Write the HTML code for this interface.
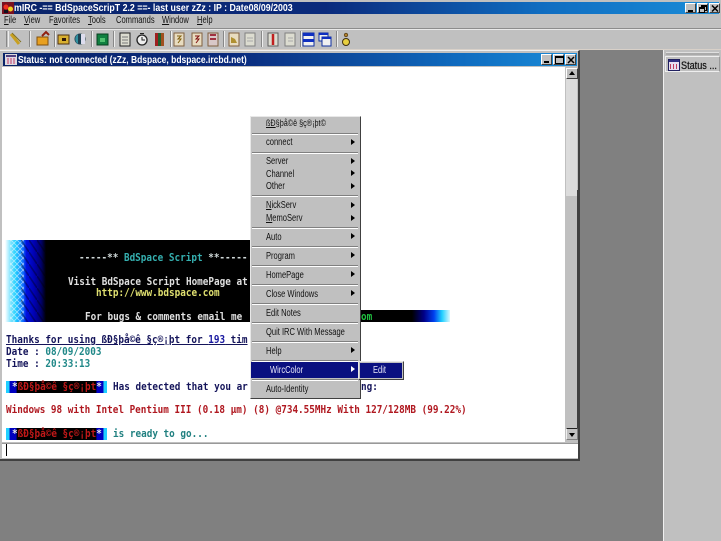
<!DOCTYPE html>
<html><head><meta charset="utf-8"><style>
html,body{margin:0;padding:0;width:721px;height:541px;overflow:hidden;background:#808080}
#root{position:absolute;left:0;top:0;width:721px;height:541px;overflow:hidden;filter:blur(.25px)}
div,span.a,svg{position:absolute}
.t{white-space:pre;height:12px;transform-origin:0 50%}
.u{font:10px/12px "Liberation Sans",sans-serif;color:#111;transform:scaleX(.755)}
.m{font:bold 10.3px/12px "DejaVu Sans Mono","Liberation Mono",monospace;color:#14145a;transform:scaleX(.906)}
.h{font:bold 10.2px/12px "Liberation Sans",sans-serif;color:#fff}
.sep{left:252px;width:106px;height:1px;background:#808080;border-bottom:1px solid #fff}
.arr{left:351px;width:0;height:0;border-left:4px solid #000;border-top:3.5px solid transparent;border-bottom:3.5px solid transparent}
.btn{background:#c0c0c0;border:1px solid;border-color:#fff #404040 #404040 #fff;box-sizing:border-box}
.ts{top:31px;width:2px;height:16px;border-left:1px solid #888;border-right:1px solid #eee;box-sizing:border-box}
u{text-underline-offset:1px}
</style></head><body><div id="root">

<!-- main frame -->
<div style="left:0;top:0;width:721px;height:50px;background:#c0c0c0"></div>
<div style="left:2px;top:2px;width:717px;height:12px;background:linear-gradient(90deg,#0a246a 0,#0a2a7c 45%,#0f6cc0 75%,#1a8cd8 100%)"></div>
<div class="t h" style="left:14px;top:3px;transform:scaleX(.864)">mIRC -== BdSpaceScripT 2.2 ==- last user zZz : IP : Date08/09/2003</div>
<svg style="left:2px;top:2px" width="12" height="12"><rect width="12" height="12" fill="#7a1020"/><circle cx="4" cy="5" r="2.5" fill="#f03020"/><circle cx="8.5" cy="7" r="2.5" fill="#f0d020"/><rect x="2" y="8" width="4" height="3" fill="#101020"/></svg>
<div class="btn" style="left:685px;top:3px;width:11px;height:10px"><div style="left:2px;top:6px;width:5px;height:2px;background:#000"></div></div>
<div class="btn" style="left:697px;top:3px;width:11px;height:10px"><div style="left:3px;top:1px;width:4px;height:3px;border:1px solid #000;border-top-width:2px"></div><div style="left:1px;top:3px;width:4px;height:3px;border:1px solid #000;border-top-width:2px;background:#c0c0c0"></div></div>
<div class="btn" style="left:709px;top:3px;width:11px;height:10px"><svg style="left:1px;top:1px" width="8" height="7"><path d="M1 0.5L7 6.5M7 0.5L1 6.5" stroke="#000" stroke-width="1.5"/></svg></div>

<!-- menu bar -->
<div class="t u" style="left:4px;top:15px"><u>F</u>ile</div>
<div class="t u" style="left:24px;top:15px"><u>V</u>iew</div>
<div class="t u" style="left:49px;top:15px">F<u>a</u>vorites</div>
<div class="t u" style="left:88px;top:15px"><u>T</u>ools</div>
<div class="t u" style="left:116px;top:15px">Commands</div>
<div class="t u" style="left:162px;top:15px"><u>W</u>indow</div>
<div class="t u" style="left:197px;top:15px"><u>H</u>elp</div>
<div style="left:0;top:29px;width:721px;height:1px;background:#e8e8e8"></div>
<div style="left:0;top:28px;width:721px;height:1px;background:#8c8c8c"></div>
<div style="left:0;top:49px;width:721px;height:1px;background:#d8d0c8"></div>

<!-- toolbar separators -->
<div class="ts" style="left:6px;width:3px"></div>
<div class="ts" style="left:29px"></div><div class="ts" style="left:54px"></div><div class="ts" style="left:91px"></div><div class="ts" style="left:113px"></div><div class="ts" style="left:170px"></div><div class="ts" style="left:223px"></div><div class="ts" style="left:261px"></div><div class="ts" style="left:300px"></div><div class="ts" style="left:336px"></div>

<!-- toolbar icons -->
<svg style="left:0;top:30px" width="360" height="18">
<path d="M11 4L19 14" stroke="#c8a020" stroke-width="3"/><path d="M12 3L21 12" stroke="#807020" stroke-width="1"/>
<rect x="37" y="7" width="11" height="8" fill="#e8a020" stroke="#805010"/><path d="M42 6L46 2L49 5" stroke="#902010" stroke-width="2" fill="none"/>
<rect x="58" y="5" width="11" height="9" fill="#d8b030" stroke="#503010"/><rect x="62" y="8" width="4" height="3" fill="#301808"/>
<circle cx="80" cy="9" r="5.5" fill="#204050"/><path d="M78 4a6 6 0 0 0 0 10z" fill="#3090a0"/><rect x="81" y="4" width="4" height="10" fill="#dde"/>
<rect x="97" y="4" width="11" height="11" fill="#108040" stroke="#084020"/><rect x="100" y="8" width="5" height="4" fill="#50c070"/>
<rect x="120" y="3" width="10" height="13" fill="#dcdcd0" stroke="#222"/><path d="M122 7h6M122 10h6M122 13h6" stroke="#777"/>
<circle cx="142" cy="10" r="5" fill="#eee" stroke="#222" stroke-width="1.3"/><path d="M142 7v3h3M140 3.500h4" stroke="#222" fill="none"/>
<rect x="155" y="3" width="3" height="13" fill="#a02020"/><rect x="158" y="3" width="3" height="13" fill="#206030"/><rect x="161" y="3" width="3" height="13" fill="#a05020"/>
<g stroke="#806040" fill="#e8dcc0"><rect x="174" y="3" width="10" height="13"/><rect x="192" y="3" width="10" height="13"/><rect x="208" y="3" width="10" height="13" fill="#d8c8c8"/><rect x="229" y="3" width="10" height="13"/></g>
<path d="M177 6h4l-3 3h3l-3 4" stroke="#806010" fill="none"/><path d="M195 6h4l-3 3h3l-3 4" stroke="#801010" fill="none"/><path d="M210 5h6M210 9h6" stroke="#a03040" stroke-width="2"/><path d="M231 7l4 2 2 4h-6z" fill="#b09030"/>
<rect x="245" y="3" width="10" height="13" fill="#dcdcd0" stroke="#808080"/><path d="M247 8h6M247 11h6" stroke="#aaa"/>
<rect x="268" y="3" width="10" height="13" fill="#dcdcd0" stroke="#606060"/><path d="M273 4v11" stroke="#c02020" stroke-width="2.500"/>
<rect x="285" y="3" width="10" height="13" fill="#dcdcd0" stroke="#808080"/><path d="M288 8h5M288 11h5" stroke="#aaa"/>
<rect x="303" y="3" width="11" height="13" fill="#f0f0f0" stroke="#1030a0"/><rect x="303" y="3" width="11" height="3" fill="#1030c0"/><rect x="303" y="9" width="11" height="3" fill="#1030c0"/>
<rect x="319" y="3" width="9" height="8" fill="#f0f0f0" stroke="#1030a0"/><rect x="319" y="3" width="9" height="2" fill="#1030c0"/><rect x="322" y="7" width="9" height="9" fill="#f0f0f0" stroke="#1030a0"/><rect x="322" y="7" width="9" height="2" fill="#1030c0"/>
<circle cx="346" cy="12" r="3.5" fill="#e8d040" stroke="#403010"/><circle cx="346" cy="5" r="1.8" fill="#b08030" stroke="#403010" stroke-width=".6"/>
</svg>

<!-- MDI area -->
<div style="left:0;top:50px;width:663px;height:491px;background:#808080"></div>

<!-- right panel -->
<div style="left:663px;top:50px;width:58px;height:491px;background:#c0c0c0;border-left:1px solid #f0f0f0;box-sizing:border-box"></div>
<div style="left:666px;top:52px;width:53px;height:2px;background:#aaa;border-top:1px solid #e0e0e0"></div>
<div style="left:665px;top:56px;width:55px;height:16px;box-sizing:border-box;border:1px solid;border-color:#eee #999 #eee #eee"></div>
<svg style="left:668px;top:59px" width="12" height="12"><rect x=".5" y=".5" width="11" height="11" fill="#e8e0f0" stroke="#202060"/><rect x="1" y="1" width="10" height="2" fill="#303080"/><path d="M2.500 5v5M5.500 5v5M8.500 5v5" stroke="#c04060"/></svg>
<div class="t" style="left:681px;top:60px;font:10.6px/12px 'Liberation Sans',sans-serif;color:#111;-webkit-text-stroke:.2px #111;transform:scaleX(.86)">Status ...</div>

<!-- child window -->
<div style="left:0;top:50px;width:580px;height:411px;background:#c0c0c0;border-right:2px solid #404040;border-bottom:2px solid #404040;border-top:1px solid #f0f0f0;box-sizing:border-box"></div>
<div style="left:3px;top:53px;width:574px;height:13px;background:linear-gradient(90deg,#0a246a 0,#0a2a7c 40%,#0f6cc0 80%,#1a8cd8 100%)"></div>
<svg style="left:5px;top:54px" width="12" height="11"><rect x=".5" y=".5" width="11" height="10" fill="#e0d8e8" stroke="#ddd"/><rect x="1" y="1" width="10" height="2" fill="#504080"/><path d="M3 4v6M6 4v6M9 4v6" stroke="#c04060"/></svg>
<div class="t h" style="left:18px;top:55px;transform:scaleX(.835)">Status: not connected (zZz, Bdspace, bdspace.ircbd.net)</div>
<div class="btn" style="left:541px;top:54px;width:11px;height:11px"><div style="left:2px;top:6px;width:5px;height:2px;background:#000"></div></div>
<div class="btn" style="left:553px;top:54px;width:11px;height:11px"><div style="left:1px;top:1px;width:7px;height:5px;border:1px solid #000;border-top-width:2px"></div></div>
<div class="btn" style="left:565px;top:54px;width:11px;height:11px"><svg style="left:1px;top:1px" width="8" height="8"><path d="M1 1L7 7M7 1L1 7" stroke="#000" stroke-width="1.5"/></svg></div>

<!-- client -->
<div style="left:2px;top:67px;width:563px;height:375px;background:#fff"></div>
<div style="left:565px;top:67px;width:13px;height:375px;background:#c0c0c0"></div>
<div style="left:566px;top:79px;width:11px;height:117px;background:#dcdcdc"></div>
<div style="left:577px;top:190px;width:1px;height:240px;background:#404040"></div>
<div class="btn" style="left:566px;top:68px;width:12px;height:11px"><div style="left:2px;top:2px;width:0;height:0;border-left:3.5px solid transparent;border-right:3.5px solid transparent;border-bottom:4px solid #000"></div></div>
<div class="btn" style="left:566px;top:428px;width:12px;height:12px;border-color:#222 #808080 #808080 #eee"><div style="left:2px;top:4px;width:0;height:0;border-left:3.5px solid transparent;border-right:3.5px solid transparent;border-top:4px solid #000"></div></div>
<div style="left:2px;top:442px;width:576px;height:2px;background:#c0c0c0"></div>
<div style="left:2px;top:444px;width:576px;height:14px;background:#fff"></div>
<div style="left:2px;top:443px;width:576px;height:1px;background:#999"></div>
<div style="left:6px;top:444px;width:1px;height:12px;background:#000"></div>

<!-- banner -->
<div style="left:5px;top:240px;width:245px;height:82px;background:#000"></div>
<div style="left:5px;top:240px;width:41px;height:82px;background:linear-gradient(90deg,#fff 0,#90e8ff 12%,#20d0ff 26%,#1070ff 44%,#0010e0 52%,#0000b0 72%,#00006a 88%,#000 100%)"></div>
<svg style="left:5px;top:240px" width="41" height="82"><defs><pattern id="p" width="6" height="6" patternUnits="userSpaceOnUse"><path d="M0 0l3 3M3 3l3 3M6 0L0 6" stroke="#fff" stroke-width=".8" opacity=".55"/></pattern><pattern id="q" width="8" height="12" patternUnits="userSpaceOnUse"><path d="M0 0L8 12" stroke="#000" stroke-width="1.6" opacity=".35"/></pattern></defs><rect x="5" width="14" height="82" fill="url(#p)"/><rect x="16" width="25" height="82" fill="url(#q)"/></svg>
<div style="left:250px;top:310px;width:200px;height:12px;background:linear-gradient(90deg,#000 0,#000 81%,#000088 87%,#0040f0 92%,#20d0ff 96%,#d8f8ff 100%)"></div>
<div class="t m" style="left:79px;top:252px;color:#cfd8d8">-----** <span style="color:#35b0b0">BdSpace Script</span> **-----</div>
<div class="t m" style="left:68px;top:276px;color:#e0e0e0">Visit BdSpace Script HomePage at</div>
<div class="t m" style="left:96px;top:287px;color:#e0e070">http://www.bdspace.com</div>
<div class="t m" style="left:85px;top:311px;color:#e0e0e0">For bugs &amp; comments email me</div>
<div class="t m" style="left:361px;top:311px;color:#20c040">om</div>

<!-- chat text -->
<div class="t m" style="left:6px;top:334px;text-decoration:underline;text-underline-offset:1px">Thanks for using ßÐ§þå©ê §ç®¡þt for <span style="color:#1818a0">193</span> tim</div>
<div class="t m" style="left:6px;top:346px">Date : <span style="color:#208888">08/09/2003</span></div>
<div class="t m" style="left:6px;top:358px">Time : <span style="color:#208888">20:33:13</span></div>

<div style="left:6px;top:381px;width:101px;height:12px;background:linear-gradient(90deg,#20d0ff 0,#20d0ff 3%,#0000c0 4%,#0000c0 10%,#000 11%,#000 89%,#0000c0 90%,#0000c0 96%,#20d0ff 97%)"></div>
<div class="t m" style="left:12px;top:381px;color:#e8e8e8">*<span style="color:#c01818">ßÐ§þå©ê §ç®¡þt</span>*</div>
<div class="t m" style="left:113px;top:381px">Has detected that you ar</div>
<div class="t m" style="left:361px;top:381px">ng:</div>
<div class="t m" style="left:6px;top:404px;color:#b01820">Windows 98 with Intel Pentium III (0.18 µm) (8) @734.55MHz With 127/128MB (99.22%)</div>
<div style="left:6px;top:428px;width:101px;height:12px;background:linear-gradient(90deg,#20d0ff 0,#20d0ff 3%,#0000c0 4%,#0000c0 10%,#000 11%,#000 89%,#0000c0 90%,#0000c0 96%,#20d0ff 97%)"></div>
<div class="t m" style="left:12px;top:428px;color:#e8e8e8">*<span style="color:#c01818">ßÐ§þå©ê §ç®¡þt</span>*</div>
<div class="t m" style="left:113px;top:428px;color:#208080">is ready to go...</div>

<!-- context menu -->
<div style="left:250px;top:116px;width:111px;height:283px;background:#c0c0c0;box-sizing:border-box;border:1px solid;border-color:#e8e8e8 #404040 #404040 #e8e8e8"></div>
<div class="t u" style="left:266px;top:118px;font-size:9.6px"><u>ßÐ</u>§þå©ê §ç®¡þt©</div>
<div class="sep" style="top:133px"></div>
<div class="t u" style="left:266px;top:137px">connect</div><div class="arr" style="top:139px"></div>
<div class="sep" style="top:152px"></div>
<div class="t u" style="left:266px;top:156px">Server</div><div class="arr" style="top:158px"></div>
<div class="t u" style="left:266px;top:169px">Channel</div><div class="arr" style="top:170px"></div>
<div class="t u" style="left:266px;top:181px">Other</div><div class="arr" style="top:183px"></div>
<div class="sep" style="top:195px"></div>
<div class="t u" style="left:266px;top:200px"><u>N</u>ickServ</div><div class="arr" style="top:202px"></div>
<div class="t u" style="left:266px;top:213px"><u>M</u>emoServ</div><div class="arr" style="top:215px"></div>
<div class="sep" style="top:227px"></div>
<div class="t u" style="left:266px;top:232px">Auto</div><div class="arr" style="top:233px"></div>
<div class="sep" style="top:246px"></div>
<div class="t u" style="left:266px;top:251px">Program</div><div class="arr" style="top:252px"></div>
<div class="sep" style="top:265px"></div>
<div class="t u" style="left:266px;top:270px">HomePage</div><div class="arr" style="top:271px"></div>
<div class="sep" style="top:284px"></div>
<div class="t u" style="left:266px;top:289px">Close Windows</div><div class="arr" style="top:290px"></div>
<div class="sep" style="top:303px"></div>
<div class="t u" style="left:266px;top:308px">Edit Notes</div>
<div class="sep" style="top:322px"></div>
<div class="t u" style="left:266px;top:327px">Quit IRC With Message</div>
<div class="sep" style="top:341px"></div>
<div class="t u" style="left:266px;top:346px">Help</div><div class="arr" style="top:347px"></div>
<div class="sep" style="top:360px"></div>
<div style="left:251px;top:362px;width:107px;height:16px;background:#0a1080"></div>
<div class="t u" style="left:270px;top:365px;color:#e8e8f8">WircColor</div><div class="arr" style="top:366px;border-left-color:#fff"></div>
<div class="sep" style="top:379px"></div>
<div class="t u" style="left:266px;top:384px">Auto-Identity</div>

<!-- submenu -->
<div style="left:358px;top:361px;width:46px;height:19px;background:#c0c0c0;box-sizing:border-box;border:1px solid;border-color:#e8e8e8 #404040 #404040 #e8e8e8"></div>
<div style="left:360px;top:363px;width:42px;height:15px;background:#0a1080"></div>
<div class="t u" style="left:373px;top:365px;color:#e8e8f8">Edit</div>

</div></body></html>
